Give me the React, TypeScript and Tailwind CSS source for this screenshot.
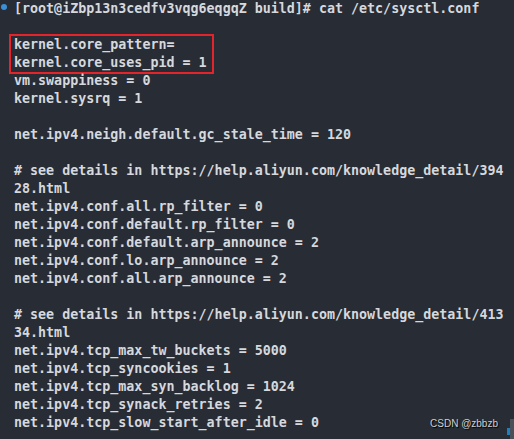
import React from "react";

const before = ["[root@iZbp13n3cedfv3vqg6eqgqZ build]# cat /etc/sysctl.conf", ""];
const boxed = ["kernel.core_pattern=", "kernel.core_uses_pid = 1"];
const after = [
  "vm.swappiness = 0",
  "kernel.sysrq = 1",
  "",
  "net.ipv4.neigh.default.gc_stale_time = 120",
  "",
  "# see details in https://help.aliyun.com/knowledge_detail/394",
  "28.html",
  "net.ipv4.conf.all.rp_filter = 0",
  "net.ipv4.conf.default.rp_filter = 0",
  "net.ipv4.conf.default.arp_announce = 2",
  "net.ipv4.conf.lo.arp_announce = 2",
  "net.ipv4.conf.all.arp_announce = 2",
  "",
  "# see details in https://help.aliyun.com/knowledge_detail/413",
  "34.html",
  "net.ipv4.tcp_max_tw_buckets = 5000",
  "net.ipv4.tcp_syncookies = 1",
  "net.ipv4.tcp_max_syn_backlog = 1024",
  "net.ipv4.tcp_synack_retries = 2",
  "net.ipv4.tcp_slow_start_after_idle = 0",
];

const Line: React.FC<{ text: string }> = ({ text }) => (
  <div className="h-[18px] whitespace-pre">{text || " "}</div>
);

export default function App() {
  return (
    <div className="relative flex w-[514px] h-[439px] overflow-hidden bg-[#282c34]">
      <div className="flex w-[14px] shrink-0 justify-start pl-px pt-[4px]">
        <div className="w-[6px] h-[6px] rounded-full bg-[#3a8fd6]" />
      </div>
      <div
        className="flex flex-col text-[13.33px] leading-[18px] font-bold text-[#d5d8dd]"
        style={{ fontFamily: '"DejaVu Sans Mono", "Liberation Mono", monospace' }}
      >
        {before.map((t, i) => (
          <Line key={`b${i}`} text={t} />
        ))}
        <div className="-ml-[5px] pl-[3px] -my-[2px] w-[205px] border-2 border-[#e3242b]">
          {boxed.map((t, i) => (
            <Line key={`x${i}`} text={t} />
          ))}
        </div>
        {after.map((t, i) => (
          <Line key={`a${i}`} text={t} />
        ))}
      </div>
      {/* watermark + scrollbar corner overlay */}
      <div
        className="absolute right-[16px] bottom-[8px] text-[10px] leading-[15px] text-[#cfcfcf] [text-shadow:1px_1px_1px_#000]"
        style={{ fontFamily: '"Liberation Sans", Arial, sans-serif' }}
      >
        CSDN @zbbzb
      </div>
      <div className="absolute right-[4px] bottom-[4px] w-[3px] h-[7px] bg-[#1e7fc0]" />
      <div className="absolute right-0 bottom-0 w-[4px] h-[20px] bg-[#4a4f58]" />
    </div>
  );
}
